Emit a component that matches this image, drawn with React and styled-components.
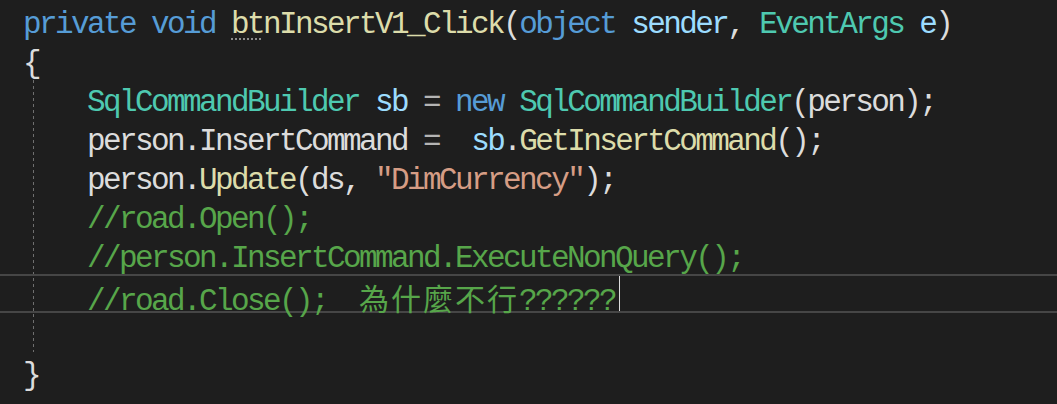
import React from 'react'
import styled, { createGlobalStyle } from 'styled-components'

const Global = createGlobalStyle`
  html, body {
    margin: 0;
    padding: 0;
    background: #1e1e1e;
  }
  body {
    width: 1057px;
    height: 404px;
    overflow: hidden;
  }
`

const Editor = styled.div`
  width: 1057px;
  height: 404px;
  padding-top: 1px;
  box-sizing: border-box;
  background: #1e1e1e;
  font-family: "Liberation Mono", "Noto Sans CJK TC", monospace;
  font-size: 31px;
  letter-spacing: -2.6px;
  color: #dcdcdc;
  overflow: hidden;
`

const Block = styled.div`
  background-image: linear-gradient(#6f6f6f 50%, transparent 50%);
  background-size: 1px 6px;
  background-repeat: repeat-y;
  background-position: 33px 1px;
`

const Line = styled.div`
  height: 39px;
  box-sizing: border-box;
  padding: 8px 0 0 23px;
  line-height: 31px;
  white-space: pre;
  box-shadow: ${(p) =>
    p.$current ? 'inset 0 2px 0 #464646, inset 0 -2px 0 #464646' : 'none'};
`

const Tok = styled.span`
  color: ${(p) => p.$c};
`

const Hint = styled.span`
  text-decoration: underline dotted #8c8c8c;
  text-decoration-thickness: 2px;
  text-underline-offset: 5px;
`

const Cjk = styled.span`
  font-family: "Noto Sans CJK TC", sans-serif;
  font-size: 30px;
  letter-spacing: 2px;
`

const Caret = styled.span`
  display: inline-block;
  width: 1px;
  height: 35px;
  margin: -6px 0 0 4px;
  vertical-align: top;
  background: #dcdcdc;
`

const KW = '#569cd6'
const TYPE = '#4ec9b0'
const FN = '#dcdcaa'
const PARAM = '#9cdcfe'
const TXT = '#dcdcdc'
const OP = '#b4b4b4'
const STR = '#d69d85'
const CMT = '#57a64a'

const App = () => {
  return (
    <Editor>
      <Global />
      <Line>
        <Tok $c={KW}>private void </Tok>
        <Tok $c={FN}>
          <Hint>bt</Hint>nInsertV1_Click
        </Tok>
        <Tok $c={TXT}>(</Tok>
        <Tok $c={KW}>object</Tok>
        <Tok $c={PARAM}> sender</Tok>
        <Tok $c={TXT}>, </Tok>
        <Tok $c={TYPE}>EventArgs</Tok>
        <Tok $c={PARAM}> e</Tok>
        <Tok $c={TXT}>)</Tok>
      </Line>
      <Line>{'{'}</Line>
      <Block>
        <Line>
          {'    '}
          <Tok $c={TYPE}>SqlCommandBuilder</Tok>
          <Tok $c={PARAM}> sb</Tok>
          <Tok $c={OP}> = </Tok>
          <Tok $c={KW}>new</Tok> <Tok $c={TYPE}>SqlCommandBuilder</Tok>
          <Tok $c={TXT}>(person);</Tok>
        </Line>
        <Line>
          {'    '}person.InsertCommand <Tok $c={OP}>=</Tok>
          {'  '}
          <Tok $c={PARAM}>sb</Tok>.<Tok $c={FN}>GetInsertCommand</Tok>();
        </Line>
        <Line>
          {'    '}person.<Tok $c={FN}>Update</Tok>(ds, <Tok $c={STR}>"DimCurrency"</Tok>);
        </Line>
        <Line>
          {'    '}
          <Tok $c={CMT}>//road.Open();</Tok>
        </Line>
        <Line>
          {'    '}
          <Tok $c={CMT}>//person.InsertCommand.ExecuteNonQuery();</Tok>
        </Line>
        <Line $current>
          {'    '}
          <Tok $c={CMT}>
            //road.Close();{'  '}
            <Cjk>為什麼不行</Cjk>??????
          </Tok>
          <Caret />
        </Line>
        <Line />
      </Block>
      <Line>{'}'}</Line>
    </Editor>
  )
}

export default App
